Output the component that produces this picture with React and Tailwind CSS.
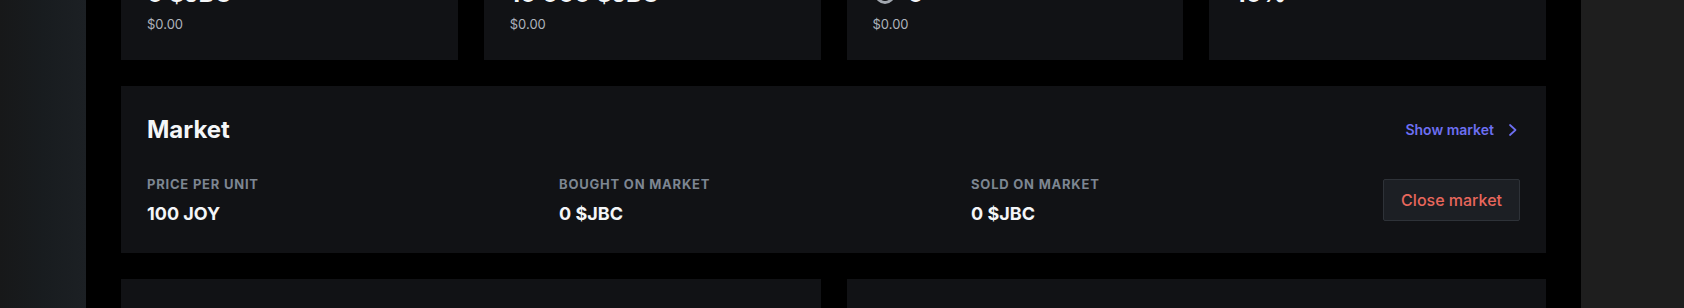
import React from "react";

function StatCard({ label, children, sub = true }) {
  return (
    <div className="flex flex-col bg-[#111215] p-[26px]">
      <div className="text-[13px] font-bold uppercase leading-5 tracking-[0.06em] text-[#7d8692]">{label}</div>
      <div className="mt-2 flex items-center gap-[11px] text-2xl font-bold leading-8 text-[#f4f6f8]">{children}</div>
      <div className={"mt-1 text-[13px] leading-5 text-[#adb3bc] " + (sub ? "" : "invisible")}>$0.00</div>
    </div>
  );
}

function JoyIcon() {
  return (
    <svg width="24" height="24" viewBox="0 0 24 24" fill="none" aria-hidden="true">
      <circle cx="12" cy="12" r="8.5" stroke="#a3a8b0" strokeWidth="3" />
    </svg>
  );
}

function Stat({ label, value }) {
  return (
    <div className="flex flex-col">
      <div className="text-[13px] font-bold uppercase leading-5 tracking-[0.06em] text-[#7d8692]">{label}</div>
      <div className="mt-2 text-lg font-bold leading-6 text-[#f4f6f8]">{value}</div>
    </div>
  );
}

export default function App() {
  return (
    <div className="flex h-[308px] w-[1684px] overflow-hidden bg-black font-['Inter',sans-serif]">
      <div className="w-[86px] shrink-0 bg-linear-to-r from-[#171819] via-[#181c1f] to-[#1c2024]" />
      <main className="w-[1495px] shrink-0 px-[35px]">
        <div className="-mt-[76px] flex flex-col gap-[26px]">
          <div className="grid grid-cols-4 gap-[26px]">
            <StatCard label="Total supply">0 $JBC</StatCard>
            <StatCard label="Your share">10 000 $JBC</StatCard>
            <StatCard label="Total revenue">
              <JoyIcon />
              <span>0</span>
            </StatCard>
            <StatCard label="Revenue share" sub={false}>10%</StatCard>
          </div>

          <section className="bg-[#111215] px-[26px] pb-[27px] pt-[26px]">
            <div className="flex h-9 items-center justify-between">
              <h2 className="text-2xl font-bold leading-9 text-[#f4f6f8]">Market</h2>
              <button className="flex items-center gap-[14px] text-sm font-semibold leading-5 text-[#6d6ff2]">
                <span>Show market</span>
                <svg width="12" height="12" viewBox="0 0 12 12" fill="none" aria-hidden="true">
                  <polyline points="2,1 7.5,6 2,11" stroke="#6d6ff2" strokeWidth="1.7" strokeLinecap="round" strokeLinejoin="round" />
                </svg>
              </button>
            </div>
            <div className="mt-[26px] grid grid-cols-[1fr_1fr_1fr_auto] items-center gap-6">
              <Stat label="Price per unit" value="100 JOY" />
              <Stat label="Bought on market" value="0 $JBC" />
              <Stat label="Sold on market" value="0 $JBC" />
              <button className="h-[42px] rounded-[2px] border border-[#2e3238] bg-[#1c1f24] px-[17px] text-base font-medium leading-6 text-[#e8675c]">
                Close market
              </button>
            </div>
          </section>

          <div className="grid grid-cols-2 gap-[26px]">
            <div className="h-[200px] bg-[#111215]" />
            <div className="h-[200px] bg-[#111215]" />
          </div>
        </div>
      </main>
      <div className="flex-1 bg-[#1e1e1e]" />
    </div>
  );
}
